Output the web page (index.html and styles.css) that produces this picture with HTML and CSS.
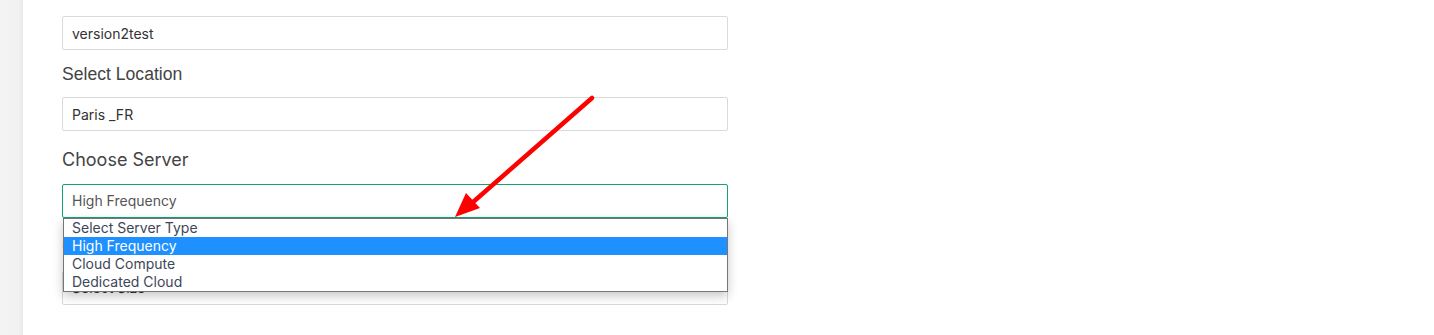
FILE: index.html
```html
<!DOCTYPE html>
<html lang="en">
<head>
  <meta charset="UTF-8" />
  <title>Create Server</title>
  <link rel="stylesheet" href="styles.css">
</head>
<body>
  <div class="page">
    <aside class="sidebar"></aside>

    <main class="content">
      <form class="server-form">
        <input class="field" type="text" value="version2test">

        <label class="label label-arial">Select Location</label>
        <input class="field" type="text" value="Paris _FR">

        <label class="label">Choose Server</label>
        <div class="select-wrap">
          <div class="field field-active">High Frequency</div>

          <!-- open dropdown list -->
          <ul class="dropdown">
            <li>Select Server Type</li>
            <li class="selected">High Frequency</li>
            <li>Cloud Compute</li>
            <li>Dedicated Cloud</li>
          </ul>
        </div>

        <label class="label">Choose Size</label>
        <div class="field">Select Size</div>
      </form>
    </main>

    <svg class="pointer" width="1434" height="335" viewBox="0 0 1434 335">
      <line x1="592" y1="98" x2="472" y2="203" stroke="#ff0000" stroke-width="4.5" stroke-linecap="round"/>
      <polygon points="455,217 466,193 480,208" fill="#ff0000"/>
    </svg>
  </div>
</body>
</html>
```

FILE: styles.css
```css
* {
  box-sizing: border-box;
}
body {
  margin: 0;
  background: #fff;
  font-family: Inter, 'Noto Sans', sans-serif;
  color: #333;
}

.page {
  position: relative;
  display: flex;
  height: 335px;
  overflow: hidden;
}

.sidebar {
  width: 23px;
  flex: none;
  background: linear-gradient(90deg, #f3f3f3 0%, #f1f1f1 80%, #e9e9e9 100%);
}

.content {
  flex: 1;
  padding: 16px 0 0 39px;
}

.server-form {
  width: 666px;
  display: flex;
  flex-direction: column;
}

.field {
  display: block;
  width: 100%;
  height: 34px;
  padding: 0 9px;
  border: 1px solid #dadada;
  border-radius: 2px;
  background: #fff;
  font-family: Inter, 'Noto Sans', sans-serif;
  font-size: 14px;
  line-height: 32px;
  color: #333;
  outline: none;
}

.field-active {
  border-color: #10a37a;
  color: #555;
}

.label {
  margin: 17px 0 12px;
  font-size: 18px;
  line-height: 24px;
  color: #444;
}
.label-arial {
  margin: 12px 0 11px;
  font-family: 'Liberation Sans', Arial, sans-serif;
  font-size: 17.6px;
}

.select-wrap {
  position: relative;
}

.dropdown {
  position: absolute;
  left: 1px;
  top: 34px;
  right: 0;
  z-index: 10;
  margin: 0;
  padding: 0;
  list-style: none;
  background: #fff;
  border: 1px solid #767676;
  box-shadow: 0 4px 10px rgba(0, 0, 0, 0.22);
}

.dropdown li {
  height: 18px;
  padding-left: 8px;
  font-size: 14px;
  line-height: 18px;
  color: #3e4658;
}

.dropdown li.selected {
  background: #1e90ff;
  color: #fff;
}

.pointer {
  position: absolute;
  left: 0;
  top: 0;
  z-index: 20;
  pointer-events: none;
}
```
